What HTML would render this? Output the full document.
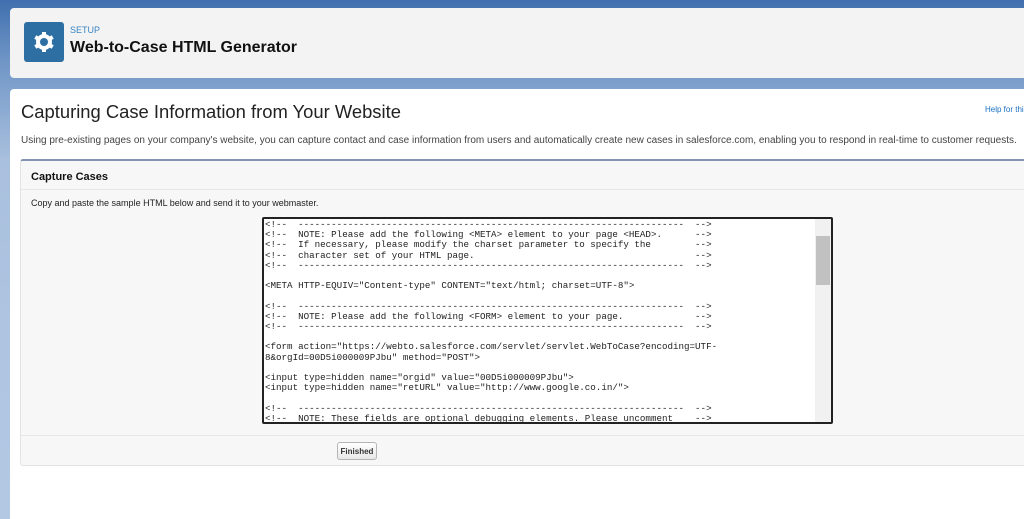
<!DOCTYPE html>
<html style="background:#b3c8e3"><head><style>
body{margin:0;width:1024px;height:507px;overflow:hidden;background:linear-gradient(#3f6fae 0px,#6f95c6 60px,#a9c0de 160px,#b3c8e3 507px);font-family:"Liberation Sans",Arial,sans-serif;position:relative}
.hdr{position:absolute;left:10px;top:8px;width:1030px;height:70px;background:#f3f3f3;border-radius:4px}
.icon{position:absolute;left:14px;top:14px;width:40px;height:40px;background:#2e6fa3;border-radius:3px}
.setup{position:absolute;left:60px;top:17px;font-size:9px;color:#3a85c4}
.h1{position:absolute;left:60px;top:31px;font-size:16px;font-weight:bold;color:#111}
.main{position:absolute;left:10px;top:89px;width:1030px;height:430px;background:#fff;border-radius:4px 4px 0 0}
.t{position:absolute;left:11px;top:12px;font-size:18.4px;color:#222}
.help{position:absolute;left:975px;top:16px;font-size:8px;color:#1a6fc0;white-space:nowrap}
.desc{position:absolute;left:11px;top:46px;font-size:10px;color:#444;white-space:nowrap}
.box{position:absolute;left:10px;top:70px;width:1020px;height:304px;background:#f7f7f7;border-top:2px solid #8592b4;border-bottom:1px solid #e3e3e3;border-left:1px solid #e3e3e3;border-radius:3px}
.bh{height:29px;border-bottom:1px solid #e6e6e6;font-size:11px;font-weight:bold;padding:10px 0 0 10px;box-sizing:border-box;color:#111}
.cp{position:absolute;left:10px;top:37px;font-size:9px;color:#222}
.ta{position:absolute;left:241px;top:56px;width:571px;height:207px;box-sizing:border-box;border:2px solid #222;background:#fff;overflow:hidden;border-radius:2px}
pre{margin:0;padding:1px 0 0 1px;font-family:"Liberation Mono",monospace;font-size:9.2px;line-height:10.2px;color:#222}
.sb{position:absolute;right:0;top:0;width:16px;height:203px;background:#f1f1f1}
.th{position:absolute;right:1px;top:17px;width:14px;height:49px;background:#c1c1c1}
.foot{position:absolute;left:0;top:274px;width:100%;border-top:1px solid #e6e6e6}
.btn{position:absolute;left:316px;top:281px;width:40px;height:18px;border:1px solid #b5b5b5;border-radius:3px;background:linear-gradient(#fff,#e8e8e8);font-size:8px;font-weight:bold;color:#333;text-align:center;line-height:18px;box-sizing:border-box}
</style></head><body>
<div class="hdr">
<div class="icon"><svg width="40" height="40" viewBox="0 0 40 40"><g fill="#fff"><circle cx="20" cy="20" r="8"/><g stroke="#fff" stroke-width="4"><line x1="20" y1="10" x2="20" y2="30"/><line x1="11.3" y1="15" x2="28.7" y2="25"/><line x1="11.3" y1="25" x2="28.7" y2="15"/></g></g><circle cx="20" cy="20" r="4" fill="#2e6fa3"/></svg></div>
<div class="setup">SETUP</div>
<div class="h1">Web-to-Case HTML Generator</div>
</div>
<div class="main">
<div class="t">Capturing Case Information from Your Website</div>
<div class="help">Help for this Page</div>
<div class="desc">Using pre-existing pages on your company's website, you can capture contact and case information from users and automatically create new cases in salesforce.com, enabling you to respond in real-time to customer requests.</div>
<div class="box">
<div class="bh">Capture Cases</div>
<div class="cp">Copy and paste the sample HTML below and send it to your webmaster.</div>
<div class="ta"><pre>&lt;!--  ----------------------------------------------------------------------  --&gt;
&lt;!--  NOTE: Please add the following &lt;META&gt; element to your page &lt;HEAD&gt;.      --&gt;
&lt;!--  If necessary, please modify the charset parameter to specify the        --&gt;
&lt;!--  character set of your HTML page.                                        --&gt;
&lt;!--  ----------------------------------------------------------------------  --&gt;

&lt;META HTTP-EQUIV="Content-type" CONTENT="text/html; charset=UTF-8"&gt;

&lt;!--  ----------------------------------------------------------------------  --&gt;
&lt;!--  NOTE: Please add the following &lt;FORM&gt; element to your page.             --&gt;
&lt;!--  ----------------------------------------------------------------------  --&gt;

&lt;form action="https://webto.salesforce.com/servlet/servlet.WebToCase?encoding=UTF-
8&amp;orgId=00D5i000009PJbu" method="POST"&gt;

&lt;input type=hidden name="orgid" value="00D5i000009PJbu"&gt;
&lt;input type=hidden name="retURL" value="http://www.google.co.in/"&gt;

&lt;!--  ----------------------------------------------------------------------  --&gt;
&lt;!--  NOTE: These fields are optional debugging elements. Please uncomment    --&gt;</pre>
<div class="sb"><div class="th"></div></div></div>
<div class="foot"></div>
<div class="btn">Finished</div>
</div>
</div>
</body></html>
